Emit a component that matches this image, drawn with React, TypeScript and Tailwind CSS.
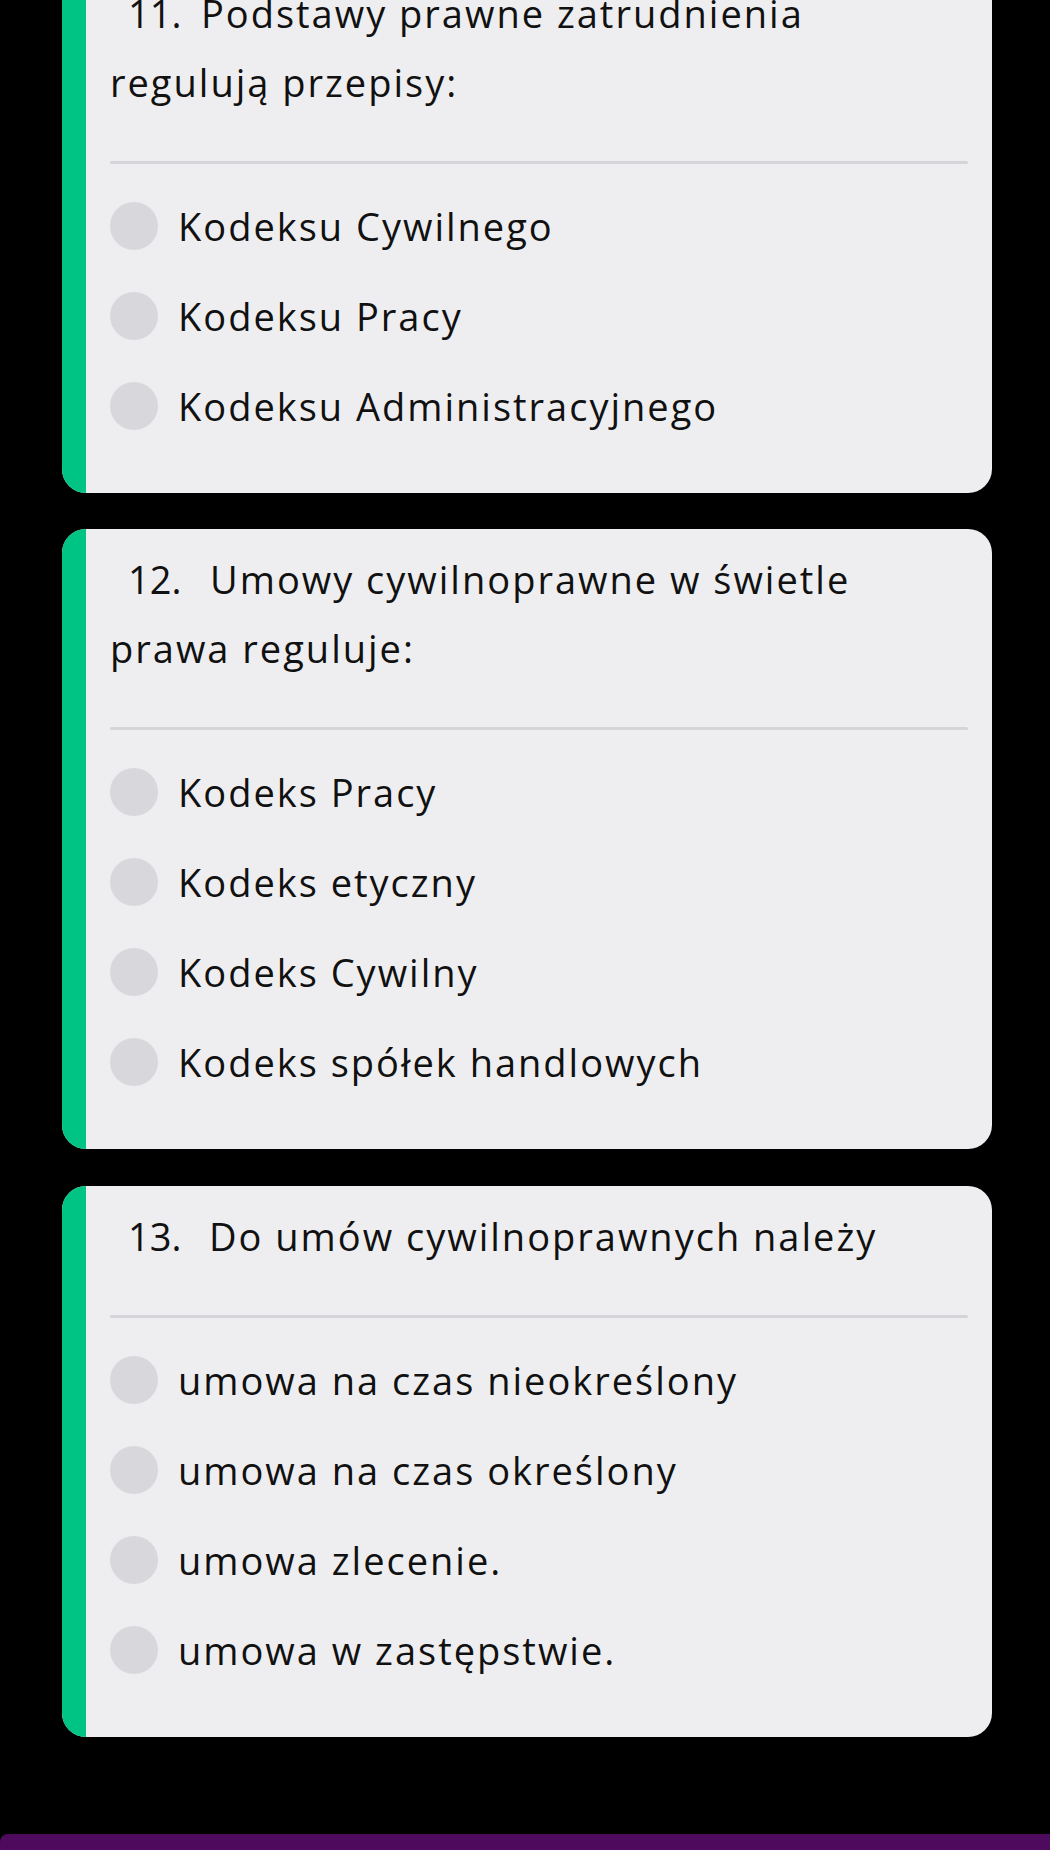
import React from "react";

type Question = {
  id: number;
  numberWidth: string;
  lines: string[];
  options: string[];
  cardClass: string;
};

const questions: Question[] = [
  {
    id: 11,
    numberWidth: "w-[73px]",
    lines: ["Podstawy prawne zatrudnienia", "regulują przepisy:"],
    options: ["Kodeksu Cywilnego", "Kodeksu Pracy", "Kodeksu Administracyjnego"],
    cardClass: "-mt-[37px]",
  },
  {
    id: 12,
    numberWidth: "w-[82px]",
    lines: ["Umowy cywilnoprawne w świetle", "prawa reguluje:"],
    options: ["Kodeks Pracy", "Kodeks etyczny", "Kodeks Cywilny", "Kodeks spółek handlowych"],
    cardClass: "mt-[36px]",
  },
  {
    id: 13,
    numberWidth: "w-[81px]",
    lines: ["Do umów cywilnoprawnych należy"],
    options: [
      "umowa na czas nieokreślony",
      "umowa na czas określony",
      "umowa zlecenie.",
      "umowa w zastępstwie.",
    ],
    cardClass: "mt-[37px]",
  },
];

const QuestionCard = ({ q }: { q: Question }) => {
  return (
    <div className={`flex overflow-hidden rounded-[24px] bg-[#eeeef0] ${q.cardClass}`}>
      {/* green accent */}
      <div className="w-[24px] shrink-0 bg-[#00c483]" />

      <div className="flex-1 px-[24px] pt-[16px] pb-[42px]">
        <p className="text-[38px] leading-[69px] tracking-[2px] text-[#111]">
          {q.lines.map((line, i) => (
            <React.Fragment key={i}>
              {i === 0 ? (
                <>
                  <span className={`ml-[18px] inline-block tracking-normal ${q.numberWidth}`}>{q.id}.</span>
                  {line}
                </>
              ) : (
                <>
                  <br />
                  {line}
                </>
              )}
            </React.Fragment>
          ))}
        </p>

        <div className="mt-[44px] h-[3px] rounded-full bg-[#d5d5d9]" />

        <ul className="mt-[17px] flex flex-col">
          {q.options.map((opt) => (
            <li key={opt} className="flex h-[90px] items-center gap-[20px]">
              <span className="h-[48px] w-[48px] shrink-0 rounded-full bg-[#d8d8dc]" />
              <span className="text-[38px] leading-none tracking-[2px] text-[#111]">{opt}</span>
            </li>
          ))}
        </ul>
      </div>
    </div>
  );
};

export default function App() {
  return (
    <div
      className="flex h-[1850px] w-[1050px] flex-col overflow-hidden bg-black"
      style={{ fontFamily: '"Open Sans", "Noto Sans", sans-serif' }}
    >
      <div className="flex flex-col pl-[62px] pr-[58px]">
        {questions.map((q) => (
          <QuestionCard key={q.id} q={q} />
        ))}
      </div>

      <div className="flex-1" />

      {/* bottom navigation strip */}
      <div className="h-[16px] rounded-tl-[8px] bg-[#4e0a5c]" />
    </div>
  );
}
